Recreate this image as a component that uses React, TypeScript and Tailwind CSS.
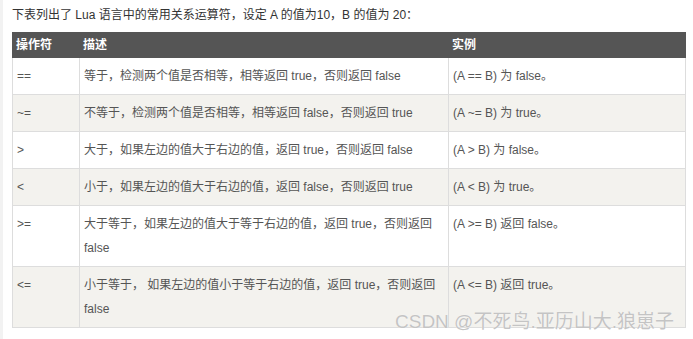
const rows: { op: string; desc: React.ReactNode; example: string }[] = [
  {
    op: "==",
    desc: "等于，检测两个值是否相等，相等返回 true，否则返回 false",
    example: "(A == B) 为 false。",
  },
  {
    op: "~=",
    desc: "不等于，检测两个值是否相等，相等返回 false，否则返回 true",
    example: "(A ~= B) 为 true。",
  },
  {
    op: ">",
    desc: "大于，如果左边的值大于右边的值，返回 true，否则返回 false",
    example: "(A > B) 为 false。",
  },
  {
    op: "<",
    desc: "小于，如果左边的值大于右边的值，返回 false，否则返回 true",
    example: "(A < B) 为 true。",
  },
  {
    op: ">=",
    desc: (
      <>
        大于等于，如果左边的值大于等于右边的值，返回 true，否则返回
        <br />
        false
      </>
    ),
    example: "(A >= B) 返回 false。",
  },
  {
    op: "<=",
    desc: (
      <>
        小于等于， 如果左边的值小于等于右边的值，返回 true，否则返回
        <br />
        false
      </>
    ),
    example: "(A <= B) 返回 true。",
  },
];

export default function App() {
  return (
    <div
      className="relative flex w-[693px] h-[339px] bg-white overflow-hidden"
      style={{ fontFamily: '"Liberation Sans", "Noto Sans CJK SC", sans-serif' }}
    >
      {/* page edge */}
      <div className="w-[3px] shrink-0 bg-[#f2f2f2]" />

      <div className="pl-[9px]">
        <p className="pt-[3px] text-[12px] leading-6 text-[#333] whitespace-nowrap">
          下表列出了 Lua 语言中的常用关系运算符，设定 A 的值为10，B 的值为 20：
        </p>

        <table className="mt-[5px] w-[673px] border-collapse text-[12px] table-fixed">
          <colgroup>
            <col className="w-[67px]" />
            <col className="w-[369px]" />
            <col className="w-[237px]" />
          </colgroup>
          <thead>
            <tr className="bg-[#555] text-white font-bold text-left">
              <th className="px-[3px] py-[3px] leading-[18px] border border-[#555]">操作符</th>
              <th className="px-[3px] py-[3px] leading-[18px] border border-[#555]">描述</th>
              <th className="px-[3px] py-[3px] leading-[18px] border border-[#555]">实例</th>
            </tr>
          </thead>
          <tbody>
            {rows.map((row, i) => (
              <tr key={row.op} className={i % 2 === 1 ? "bg-[#f3f2ee]" : "bg-white"}>
                <td className="align-top px-[4px] py-[6px] leading-6 text-[#555] border border-[#ddd]">
                  {row.op}
                </td>
                <td className="align-top px-[4px] py-[6px] leading-6 text-[#555] border border-[#ddd] whitespace-nowrap">
                  {row.desc}
                </td>
                <td className="align-top px-[4px] py-[6px] leading-6 text-[#555] border border-[#ddd]">
                  {row.example}
                </td>
              </tr>
            ))}
          </tbody>
        </table>
      </div>

      {/* watermark */}
      <div className="absolute left-[395px] top-[312px] text-[19px] leading-[19px] text-[#c4c4c4] whitespace-nowrap [text-shadow:0_0_1px_#fff]">
        CSDN @不死鸟.亚历山大.狼崽子
      </div>
    </div>
  );
}
